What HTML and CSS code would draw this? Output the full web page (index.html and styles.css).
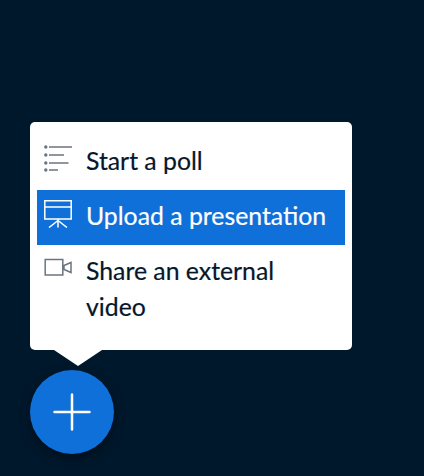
FILE: index.html
```html
<!DOCTYPE html>
<html lang="en">
<head>
<meta charset="utf-8">
<title>Actions</title>
<link rel="stylesheet" href="styles.css">
</head>
<body>
<main class="stage">
  <div class="menu">
    <div class="item">
      <svg class="icon" width="28" height="28" viewBox="0 0 28 28" fill="none" stroke="#6b7480" stroke-width="1.500">
        <path d="M5 2h23M5 10h15M5 18h19.500M5 25h9"/>
        <g fill="#6b7480" stroke="none"><circle cx="1.800" cy="2" r="1.700"/><circle cx="1.800" cy="10" r="1.700"/><circle cx="1.800" cy="18" r="1.700"/><circle cx="1.800" cy="25" r="1.700"/></g>
      </svg>
      <span class="label">Start a poll</span>
    </div>
    <div class="item active">
      <svg class="icon" width="28" height="28" viewBox="0 0 28 28" fill="none" stroke="#fff" stroke-width="1.500">
        <path d="M.8 .8h26.400v18.200H.8zM.8 7h26.400M14 19v8.500M14 20.500L5 27.500M14 20.500L23 27.500"/>
      </svg>
      <span class="label">Upload a presentation</span>
    </div>
    <div class="item">
      <svg class="icon" width="28" height="28" viewBox="0 0 28 28" fill="none" stroke="#6b7480" stroke-width="1.500">
        <path d="M1.200 4.500h17.600v15.500H1.200zM20 10.500l7-3v10l-7-3z"/>
      </svg>
      <span class="label">Share an external<br>video</span>
    </div>
    <span class="tail"></span>
  </div>
  <button class="fab" type="button" aria-label="Actions">
    <svg width="38" height="38" viewBox="0 0 38 38" fill="none" stroke="#fff" stroke-width="2.500" stroke-linecap="round"><path d="M19 1.500v35M1.500 19h35"/></svg>
  </button>
</main>
</body>
</html>
```
FILE: styles.css
```css
* { box-sizing: border-box; }
html, body { margin: 0; height: 100%; }
body { background: #00182c; overflow: hidden; font-family: Lato, "Noto Sans", sans-serif; }
.stage { display: flex; flex-direction: column; align-items: flex-start; padding: 122px 0 0 30px; }
.menu { position: relative; width: 322px; background: #fff; border-radius: 5px; padding: 13px 7px 14px; }
.item { display: flex; gap: 14px; padding: 8px 7px 11px; color: #06172a; font-size: 24.800px; line-height: 36px; -webkit-text-stroke: 0.2px currentColor; }
.item .icon { flex: none; margin-top: 2px; }
.active { background: #1070d9; color: #fff; }
.label { display: block; }
.tail { position: absolute; left: 24px; top: 100%; width: 48px; height: 16px; background: #fff; clip-path: polygon(0 0, 100% 0, 50% 100%); }
.fab { display: flex; align-items: center; justify-content: center; width: 84px; height: 84px; margin-top: 20px; padding: 0; border: 0; border-radius: 50%; background: #1070d9; box-shadow: 0 4px 12px rgba(0,0,0,.4); }
```
